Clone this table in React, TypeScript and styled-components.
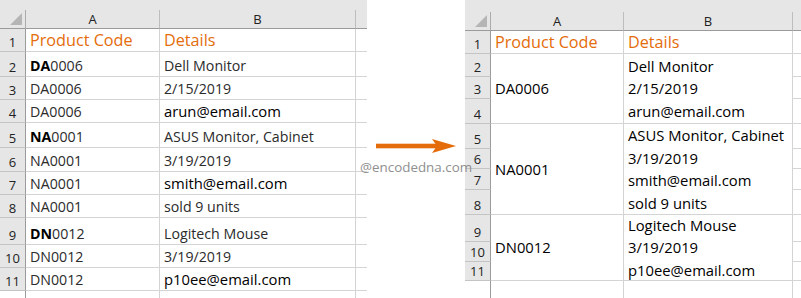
import React from 'react';
import styled, { createGlobalStyle } from 'styled-components';

const GlobalStyle = createGlobalStyle`
  body {
    margin: 0;
    background: #ffffff;
    font-family: "Open Sans", "Liberation Sans", sans-serif;
  }
`;

const Page = styled.div`
  position: relative;
  width: 801px;
  height: 298px;
  display: flex;
  overflow: hidden;
  background: #ffffff;
`;

const Sheet = styled.div<{ $width: number }>`
  width: ${(p) => p.$width}px;
  flex: none;
  display: flex;
  flex-direction: column;
`;

const TopBand = styled.div<{ $height: number }>`
  height: ${(p) => p.$height}px;
  background: #e6e6e6;
`;

const Grid = styled.div<{ $cols: string; $rows: string }>`
  display: grid;
  grid-template-columns: ${(p) => p.$cols};
  grid-template-rows: ${(p) => p.$rows};
`;

const Corner = styled.div`
  position: relative;
  background: #e6e6e6;
  border-right: 1px solid #ababab;
  border-bottom: 1px solid #9b9b9b;
  box-sizing: border-box;

  svg {
    position: absolute;
    right: 2px;
    bottom: 2px;
  }
`;

const ColHead = styled.div<{ $last?: boolean }>`
  background: #e6e6e6;
  border-right: ${(p) => (p.$last ? 'none' : '1px solid #bdbdbd')};
  border-bottom: 1px solid #9b9b9b;
  box-sizing: border-box;
  display: flex;
  align-items: center;
  justify-content: center;
  font-size: 13px;
  color: #222;
`;

const RowHead = styled.div<{ $blank?: boolean }>`
  background: ${(p) => (p.$blank ? '#ffffff' : '#e6e6e6')};
  border-right: 1px solid #9b9b9b;
  border-bottom: ${(p) => (p.$blank ? 'none' : '1px solid #c4c4c4')};
  box-sizing: border-box;
  display: flex;
  align-items: flex-end;
  justify-content: center;
  font-size: 13px;
  line-height: 18px;
  color: #222;
`;

const Cell = styled.div<{
  $span?: number;
  $middle?: boolean;
  $orange?: boolean;
  $light?: boolean;
  $last?: boolean;
  $blank?: boolean;
}>`
  grid-row: span ${(p) => p.$span ?? 1};
  border-right: ${(p) => (p.$last ? 'none' : '1px solid #d4d4d4')};
  border-bottom: ${(p) => (p.$blank ? 'none' : '1px solid #d4d4d4')};
  box-sizing: border-box;
  display: flex;
  flex-direction: column;
  justify-content: ${(p) => (p.$middle ? 'center' : 'flex-end')};
  padding: 0 0 0 4px;
  white-space: nowrap;
  font-size: ${(p) => (p.$orange ? '16.2px' : p.$light ? '14.2px' : '14.8px')};
  line-height: 21px;
  color: ${(p) => (p.$orange ? '#e46c0a' : p.$light ? '#2b2b2b' : '#000000')};
`;

const Lines = styled.div`
  line-height: 22.5px;
`;

const Bold = styled.b`
  font-weight: 700;
  color: #000;
`;

const ArrowArea = styled.div`
  width: 98px;
  flex: none;
  padding: 137px 0 0 8px;
  box-sizing: border-box;
`;

const Watermark = styled.div`
  position: absolute;
  left: 360px;
  top: 159px;
  font-size: 13.4px;
  line-height: 16px;
  color: #8f8f8f;
  z-index: 2;
`;

type Row = {
  n: number;
  h: number;
  a?: React.ReactNode;
  b?: React.ReactNode;
  span?: number;
  head?: boolean;
  lightA?: boolean;
  lightB?: boolean;
};

const leftRows: Row[] = [
  { n: 1, h: 23, a: 'Product Code', b: 'Details', head: true },
  { n: 2, h: 25, a: <span><Bold>DA</Bold>0006</span>, b: 'Dell Monitor', lightA: true, lightB: true },
  { n: 3, h: 23, a: 'DA0006', b: '2/15/2019', lightA: true, lightB: true },
  { n: 4, h: 23, a: 'DA0006', b: 'arun@email.com', lightA: true },
  { n: 5, h: 25, a: <span><Bold>NA</Bold>0001</span>, b: 'ASUS Monitor, Cabinet', lightA: true, lightB: true },
  { n: 6, h: 24, a: 'NA0001', b: '3/19/2019', lightA: true, lightB: true },
  { n: 7, h: 23, a: 'NA0001', b: 'smith@email.com', lightA: true },
  { n: 8, h: 23, a: 'NA0001', b: 'sold 9 units', lightA: true, lightB: true },
  { n: 9, h: 27, a: <span><Bold>DN</Bold>0012</span>, b: 'Logitech Mouse', lightA: true, lightB: true },
  { n: 10, h: 23, a: 'DN0012', b: '3/19/2019', lightA: true, lightB: true },
  { n: 11, h: 23, a: 'DN0012', b: 'p10ee@email.com', lightA: true },
];

const rightRows: Row[] = [
  { n: 1, h: 23, a: 'Product Code', b: 'Details', head: true },
  { n: 2, h: 23, a: 'DA0006', b: ['Dell Monitor', '2/15/2019', 'arun@email.com'], span: 3 },
  { n: 3, h: 22 },
  { n: 4, h: 25 },
  { n: 5, h: 25, a: 'NA0001', b: ['ASUS Monitor, Cabinet', '3/19/2019', 'smith@email.com', 'sold 9 units'], span: 4 },
  { n: 6, h: 20 },
  { n: 7, h: 21 },
  { n: 8, h: 25 },
  { n: 9, h: 27, a: 'DN0012', b: ['Logitech Mouse', '3/19/2019', 'p10ee@email.com'], span: 3 },
  { n: 10, h: 20 },
  { n: 11, h: 19 },
];

function CornerMark() {
  return (
    <svg width="13" height="13" viewBox="0 0 13 13">
      <polygon points="12,0 12,12 0,12" fill="#b5b5b5" />
    </svg>
  );
}

function Spreadsheet({
  cols,
  band,
  rows,
  tail,
}: {
  cols: number[];
  band: number;
  rows: Row[];
  tail: number;
}) {
  const template = [19, ...rows.map((r) => r.h), tail].map((h) => `${h}px`).join(' ');
  const width = cols.reduce((s, c) => s + c, 0);

  return (
    <Sheet $width={width}>
      <TopBand $height={band} />
      <Grid $cols={cols.map((c) => `${c}px`).join(' ')} $rows={template}>
        <Corner>
          <CornerMark />
        </Corner>
        <ColHead>A</ColHead>
        <ColHead>B</ColHead>
        <ColHead $last />
        {rows.map((r) => (
          <React.Fragment key={r.n}>
            <RowHead>{r.n}</RowHead>
            {r.a !== undefined && (
              <Cell $span={r.span} $middle={!!r.span} $orange={r.head} $light={r.lightA}>
                {r.a}
              </Cell>
            )}
            {r.b !== undefined && (
              <Cell $span={r.span} $middle={!!r.span} $orange={r.head} $light={r.lightB}>
                {Array.isArray(r.b) ? (
                  <Lines>
                    {r.b.map((line) => (
                      <div key={line}>{line}</div>
                    ))}
                  </Lines>
                ) : (
                  r.b
                )}
              </Cell>
            )}
            <Cell $last />
          </React.Fragment>
        ))}
        <RowHead $blank />
        <Cell $blank />
        <Cell $blank />
        <Cell $blank $last />
      </Grid>
    </Sheet>
  );
}

function Arrow() {
  return (
    <svg width="84" height="16" viewBox="0 0 84 16">
      <rect x="1" y="5.7" width="62" height="4.6" fill="#e46c0a" />
      <polygon points="57,1 81,8 57,15 62,8" fill="#e46c0a" />
    </svg>
  );
}

export default function App() {
  return (
    <Page>
      <GlobalStyle />
      <Spreadsheet cols={[26, 134, 196, 11]} band={10} rows={leftRows} tail={7} />
      <ArrowArea>
        <Arrow />
      </ArrowArea>
      <Spreadsheet cols={[26, 133, 169, 8]} band={12} rows={rightRows} tail={17} />
      <Watermark>@encodedna.com</Watermark>
    </Page>
  );
}
